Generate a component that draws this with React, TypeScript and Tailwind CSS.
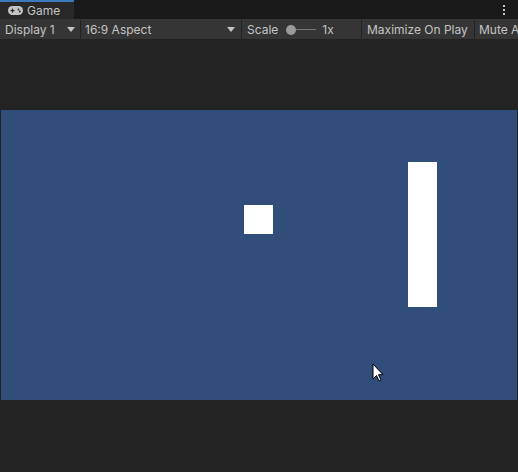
import React from 'react';

// Unity-style Game view panel
function Caret() {
  return (
    <svg width="8" height="5" viewBox="0 0 8 5" className="fill-[#c4c4c4]">
      <path d="M0 0h8L4 5z" />
    </svg>
  );
}

function GamepadIcon() {
  return (
    <svg width="15" height="9" viewBox="0 0 15 9" className="fill-[#c4c4c4]">
      <rect x="0" y="0" width="15" height="9" rx="4.5" />
      <rect x="2.5" y="4" width="4" height="1.2" className="fill-[#282828]" />
      <rect x="3.9" y="2.6" width="1.2" height="4" className="fill-[#282828]" />
      <circle cx="10.5" cy="3.5" r="0.9" className="fill-[#282828]" />
      <circle cx="11.8" cy="5.5" r="0.9" className="fill-[#282828]" />
    </svg>
  );
}

export default function App() {
  return (
    <div
      className="w-[518px] h-[472px] bg-[#232323] flex flex-col overflow-hidden text-[12px] text-[#c4c4c4]"
      style={{ fontFamily: 'Inter, "Noto Sans", sans-serif' }}
    >
      {/* Tab bar */}
      <div className="h-[19px] bg-[#191919] flex items-stretch justify-between">
        <div className="w-[74px] bg-[#282828] border-t-2 border-[#3a79bb] flex items-center gap-[4px] pl-[8px]">
          <GamepadIcon />
          <span className="leading-none">Game</span>
        </div>
        <div className="w-[14px] flex flex-col items-center justify-center gap-[2px] mr-[7px]">
          <span className="w-[2px] h-[2px] bg-[#c4c4c4]" />
          <span className="w-[2px] h-[2px] bg-[#c4c4c4]" />
          <span className="w-[2px] h-[2px] bg-[#c4c4c4]" />
        </div>
      </div>

      {/* Toolbar */}
      <div className="h-[20px] pt-[1px] bg-[#353535] flex items-stretch whitespace-nowrap">
        <div className="w-[81px] flex items-center justify-between pl-[5px] pr-[5px] border-r border-[#232323]">
          <span>Display 1</span>
          <Caret />
        </div>
        <div className="w-[161px] flex items-center justify-between pl-[4px] pr-[6px] border-r border-[#232323]">
          <span>16:9 Aspect</span>
          <Caret />
        </div>
        <div className="w-[120px] flex items-center pl-[5px] border-r border-[#232323]">
          <span>Scale</span>
          <div className="relative ml-[8px] w-[30px] h-[10px] flex items-center">
            <div className="w-full h-[1px] bg-[#777777]" />
            <div className="absolute left-0 w-[10px] h-[10px] rounded-full bg-[#9a9a9a]" />
          </div>
          <span className="ml-[6px]">1x</span>
        </div>
        <div className="w-[113px] flex items-center pl-[5px] border-r border-[#232323]">
          <span>Maximize On Play</span>
        </div>
        <div className="flex-1 flex items-center pl-[4px] overflow-hidden">
          <span>Mute Audio</span>
        </div>
      </div>

      {/* Game area */}
      <div className="flex-1">
        <div className="relative mt-[71px] h-[290px] mx-[1px] bg-[#314d79]">
          <div className="absolute left-[243px] top-[95px] w-[29px] h-[29px] bg-white" />
          <div className="absolute left-[407px] top-[52px] w-[29px] h-[145px] bg-white" />
          <svg
            className="absolute left-[371px] top-[253px]"
            width="12"
            height="19"
            viewBox="0 0 12 19"
          >
            <path d="M1 1v15l3.5-3.5 2.5 5.5 2-1-2.5-5.3H11z" fill="white" stroke="black" strokeWidth="1" />
          </svg>
        </div>
      </div>
    </div>
  );
}
